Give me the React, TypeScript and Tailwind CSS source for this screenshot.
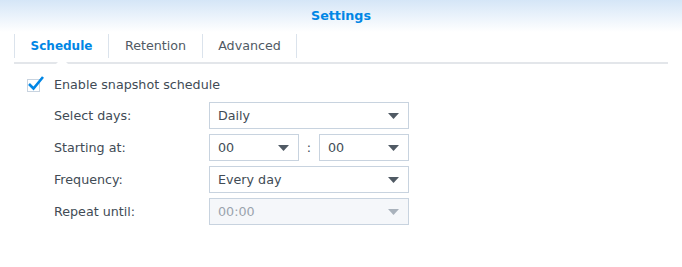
function Caret({ disabled }: { disabled?: boolean }) {
  return (
    <svg width="11" height="6" viewBox="0 0 11 6" className="shrink-0">
      <path d="M0 0h11L5.5 6z" fill={disabled ? "#a9b2bc" : "#505a64"} />
    </svg>
  );
}

function Select({ value, width, disabled }: { value: string; width: string; disabled?: boolean }) {
  return (
    <div
      className={`flex h-[27px] items-center justify-between border pl-[8px] pr-[9px] ${width} ${
        disabled ? "border-[#c8d3df] bg-[#f5f7fa] text-[#9aa3ad]" : "border-[#c8d3df] bg-white text-[#414b55]"
      }`}
    >
      <span>{value}</span>
      <Caret disabled={disabled} />
    </div>
  );
}

function Row({ label, children }: { label: string; children: React.ReactNode }) {
  return (
    <div className="flex items-center">
      <span className="w-[155px] text-[#414b55]">{label}</span>
      {children}
    </div>
  );
}

export default function App() {
  const tabs = ["Schedule", "Retention", "Advanced"];

  return (
    <div
      className="h-[267px] w-[682px] bg-white text-[12.7px]"
      style={{ fontFamily: "'DejaVu Sans', Verdana, sans-serif" }}
    >
      <div className="flex h-[32px] items-center justify-center bg-gradient-to-b from-[#d5e6f7] to-white">
        <span className="font-bold text-[#0086e5]">Settings</span>
      </div>

      <div className="mx-[14px] flex h-[32px] border-b-2 border-[#e3e6ea]">
        <div className="mt-[2px] h-[24px] w-px bg-[#dbe3ec]" />
        {tabs.map((tab, i) => (
          <div key={tab} className="relative flex h-full">
            <span
              className={`flex h-[28px] w-[93px] items-center justify-center ${
                i === 0 ? "text-[12px] font-bold text-[#0086e5]" : "text-[#505a64]"
              }`}
            >
              {tab}
            </span>
            <div className="mt-[2px] h-[24px] w-px bg-[#dbe3ec]" />
            {i === 0 && (
              <div className="absolute bottom-[-2px] left-[41px] h-0 w-0 border-x-[6px] border-b-[6px] border-x-transparent border-b-white" />
            )}
          </div>
        ))}
      </div>

      <div className="flex flex-col pl-[27px] pt-[13px]">
        <label className="flex h-[16px] items-center gap-[14px]">
          <span className="relative h-[13px] w-[13px] border border-[#c8d3df] bg-white">
            <svg width="18" height="16" viewBox="0 0 18 16" className="absolute -left-[1px] -top-[5px]">
              <path d="M2 9l4.5 4.5L16 2" fill="none" stroke="#0086e5" strokeWidth="2.6" />
            </svg>
          </span>
          <span className="text-[#414b55]">Enable snapshot schedule</span>
        </label>

        <div className="mt-[9px] flex flex-col gap-[5px] pl-[27px]">
          <Row label="Select days:">
            <Select value="Daily" width="w-[200px]" />
          </Row>
          <Row label="Starting at:">
            <Select value="00" width="w-[90px]" />
            <span className="w-[20px] text-center text-[#414b55]">:</span>
            <Select value="00" width="w-[90px]" />
          </Row>
          <Row label="Frequency:">
            <Select value="Every day" width="w-[200px]" />
          </Row>
          <Row label="Repeat until:">
            <Select value="00:00" width="w-[200px]" disabled />
          </Row>
        </div>
      </div>
    </div>
  );
}
